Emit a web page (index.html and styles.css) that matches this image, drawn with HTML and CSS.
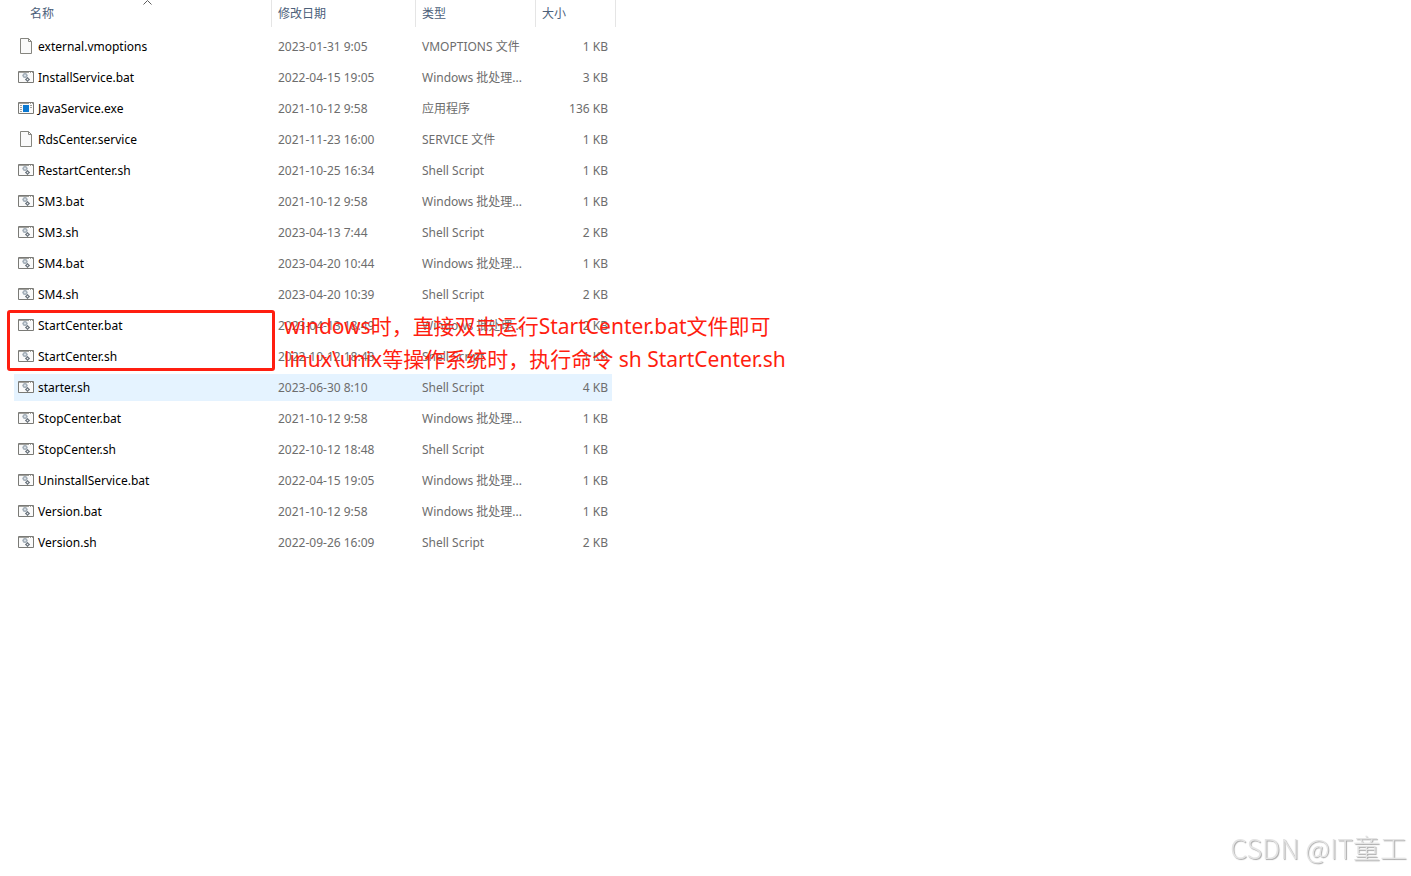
FILE: index.html
```html
<!DOCTYPE html>
<html lang="zh-CN">
<head>
    <meta charset="UTF-8">
    <meta name="viewport" content="width=device-width, initial-scale=1.0">
    <title>RdsCenter</title>
    <link rel="stylesheet" href="styles.css">
</head>
<body>
    <!-- Icons shared by the file rows -->
    <svg class="sprite" aria-hidden="true">
        <symbol id="icon-file" viewBox="0 0 16 16">
            <path d="M2.5 .5h8l3 3v12h-11z" fill="#fafafa" stroke="#85857f"/>
            <path d="M10.5 .5v3h3" fill="none" stroke="#85857f"/>
        </symbol>
        <symbol id="icon-script" viewBox="0 0 16 16">
            <path d="M.5 2.5h15v11H.5z" fill="#fafafa" stroke="#7a7a76"/>
            <path d="M1 3h14v1H1z" fill="#a0a09c"/>
            <path d="M11 3h1v1h-1zM13 3h1v1h-1z" fill="#fff"/>
            <circle cx="7" cy="6.5" r="1.8" fill="#dde3e8" stroke="#a3aeb8" stroke-width="1.4"/>
            <path d="M7 4v1M7 8v1M4.5 6.5h1M8.5 6.5h1" stroke="#a3aeb8"/>
            <circle cx="9.5" cy="10.5" r="1.3" fill="#fff" stroke="#7b838b" stroke-width="1.4"/>
            <path d="M9.5 8v1M9.5 12v1M11 10.5h1M7 10.5h1" stroke="#7b838b"/>
        </symbol>
        <symbol id="icon-app" viewBox="0 0 16 16">
            <path d="M.5 2.5h15v11H.5z" fill="#fafafa" stroke="#7a7a76"/>
            <path d="M1 3h14v1H1z" fill="#a0a09c"/>
            <path d="M11 3h1v1h-1zM13 3h1v1h-1z" fill="#fff"/>
            <path d="M5 5h6v7H5z" fill="#0a78d0"/>
            <path d="M2 5.5h2M2 7.5h2M2 9.5h2M2 11.5h2M12 5.5h2M12 7.5h2" stroke="#a0a09c"/>
        </symbol>
    </svg>

    <main class="explorer">
        <table class="files">
            <thead>
                <tr>
                    <th class="col-name" aria-sort="ascending">
                        <button type="button">名称</button>
                        <svg class="sort" viewBox="0 0 9 5" aria-hidden="true"><path d="M.5 4.5l4-4 4 4" fill="none" stroke="#5c5c5c"/></svg>
                    </th>
                    <th class="col-date"><button type="button">修改日期</button></th>
                    <th class="col-type"><button type="button">类型</button></th>
                    <th class="col-size"><button type="button">大小</button></th>
                </tr>
            </thead>
            <tbody>
                <tr><td><svg class="icon"><use href="#icon-file"/></svg>external.vmoptions</td><td>2023-01-31 9:05</td><td>VMOPTIONS 文件</td><td>1 KB</td></tr>
                <tr><td><svg class="icon"><use href="#icon-script"/></svg>InstallService.bat</td><td>2022-04-15 19:05</td><td>Windows 批处理...</td><td>3 KB</td></tr>
                <tr><td><svg class="icon"><use href="#icon-app"/></svg>JavaService.exe</td><td>2021-10-12 9:58</td><td>应用程序</td><td>136 KB</td></tr>
                <tr><td><svg class="icon"><use href="#icon-file"/></svg>RdsCenter.service</td><td>2021-11-23 16:00</td><td>SERVICE 文件</td><td>1 KB</td></tr>
                <tr><td><svg class="icon"><use href="#icon-script"/></svg>RestartCenter.sh</td><td>2021-10-25 16:34</td><td>Shell Script</td><td>1 KB</td></tr>
                <tr><td><svg class="icon"><use href="#icon-script"/></svg>SM3.bat</td><td>2021-10-12 9:58</td><td>Windows 批处理...</td><td>1 KB</td></tr>
                <tr><td><svg class="icon"><use href="#icon-script"/></svg>SM3.sh</td><td>2023-04-13 7:44</td><td>Shell Script</td><td>2 KB</td></tr>
                <tr><td><svg class="icon"><use href="#icon-script"/></svg>SM4.bat</td><td>2023-04-20 10:44</td><td>Windows 批处理...</td><td>1 KB</td></tr>
                <tr><td><svg class="icon"><use href="#icon-script"/></svg>SM4.sh</td><td>2023-04-20 10:39</td><td>Shell Script</td><td>2 KB</td></tr>
                <tr><td><svg class="icon"><use href="#icon-script"/></svg>StartCenter.bat</td><td>2023-04-13 18:49</td><td>Windows 批处理...</td><td>2 KB</td></tr>
                <tr><td><svg class="icon"><use href="#icon-script"/></svg>StartCenter.sh</td><td>2022-10-12 18:48</td><td>Shell Script</td><td>1 KB</td></tr>
                <tr class="hovered"><td><svg class="icon"><use href="#icon-script"/></svg>starter.sh</td><td>2023-06-30 8:10</td><td>Shell Script</td><td>4 KB</td></tr>
                <tr><td><svg class="icon"><use href="#icon-script"/></svg>StopCenter.bat</td><td>2021-10-12 9:58</td><td>Windows 批处理...</td><td>1 KB</td></tr>
                <tr><td><svg class="icon"><use href="#icon-script"/></svg>StopCenter.sh</td><td>2022-10-12 18:48</td><td>Shell Script</td><td>1 KB</td></tr>
                <tr><td><svg class="icon"><use href="#icon-script"/></svg>UninstallService.bat</td><td>2022-04-15 19:05</td><td>Windows 批处理...</td><td>1 KB</td></tr>
                <tr><td><svg class="icon"><use href="#icon-script"/></svg>Version.bat</td><td>2021-10-12 9:58</td><td>Windows 批处理...</td><td>1 KB</td></tr>
                <tr><td><svg class="icon"><use href="#icon-script"/></svg>Version.sh</td><td>2022-09-26 16:09</td><td>Shell Script</td><td>2 KB</td></tr>
            </tbody>
        </table>

        <!-- Notes drawn over the list -->
        <div class="mark"></div>
        <div class="note">
            <p>windows时，直接双击运行StartCenter.bat文件即可</p>
            <p>linux\unix等操作系统时，执行命令 sh StartCenter.sh</p>
        </div>
    </main>

    <div class="watermark">CSDN @IT童工</div>
</body>
</html>
```
FILE: styles.css
```css
body {
    margin: 0;
    background: #fff;
    font-family: "Noto Sans", "Noto Sans CJK SC", sans-serif;
    font-size: 12px;
    color: #6d6d6d;
}

.sprite {
    display: none;
}

.explorer {
    position: relative;
    padding-left: 14px;
}

/* File list */
.files {
    table-layout: fixed;
    width: 602px;
    border-spacing: 0;
}

.files th {
    position: relative;
    height: 31px;
    padding: 0;
    vertical-align: top;
}

.col-name {
    width: 258px;
}

.col-date {
    width: 144px;
}

.col-type {
    width: 120px;
}

.col-size {
    width: 80px;
}

.files th button {
    display: block;
    width: 100%;
    height: 27px;
    padding: 0 6px 2px;
    border: none;
    border-right: 1px solid #e5e5e5;
    background: none;
    font: inherit;
    font-weight: normal;
    text-align: left;
    color: #4c607a;
    cursor: pointer;
}

.files .col-name button {
    padding-left: 16px;
}

.sort {
    position: absolute;
    top: 0;
    left: 129px;
    width: 9px;
    height: 5px;
}

.files td {
    height: 27px;
    padding: 0 0 0 6px;
    border: 2px solid transparent;
    border-width: 2px 0;
    background-clip: padding-box;
    line-height: 16px;
    white-space: nowrap;
}

.files td:first-child {
    padding-left: 4px;
    color: #000;
}

.files td:last-child {
    padding-right: 4px;
    border-right-width: 4px;
    text-align: right;
}

.hovered td {
    background-color: #e5f3ff;
}

.icon {
    width: 16px;
    height: 16px;
    margin: -1px 4px 0 0;
    vertical-align: top;
}

/* Notes */
.mark {
    position: absolute;
    top: 310px;
    left: 7px;
    width: 262px;
    height: 55px;
    border: 3px solid #ff1e10;
    border-radius: 3px;
}

.note {
    position: absolute;
    top: 310px;
    left: 284px;
    font-size: 21px;
    line-height: 33px;
    color: #ff1e10;
    white-space: nowrap;
}

.note p {
    margin: 0;
}

.watermark {
    position: fixed;
    right: 4px;
    bottom: 10px;
    font-family: "Noto Sans CJK SC", sans-serif;
    font-size: 27px;
    font-weight: 300;
    line-height: 36px;
    color: #e4e4e4;
    text-shadow: 1px 1px 1px #a8a8a8;
}
```
